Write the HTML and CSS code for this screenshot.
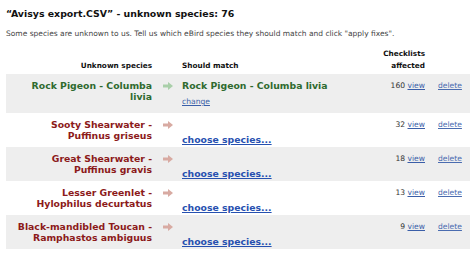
FILE: index.html
```html
<!DOCTYPE html>
<html>
<head>
<meta charset="utf-8">
<link rel="stylesheet" href="styles.css">
</head>
<body>
<h1 class="title">“Avisys export.CSV” - unknown species: 76</h1>
<p class="intro">Some species are unknown to us. Tell us which eBird species they should match and click "apply fixes".</p>
<table class="fixes">
  <thead>
    <tr>
      <th class="c-name">Unknown species</th>
      <th class="c-arrow"></th>
      <th class="c-match">Should match</th>
      <th class="c-count">Checklists<br>affected</th>
      <th class="c-del"></th>
    </tr>
  </thead>
  <tbody>
    <tr class="alt">
      <td class="c-name known">Rock Pigeon - Columba<br>livia</td>
      <td class="c-arrow"><svg class="arrow ok" width="10" height="8" viewBox="0 0 10 8"><path d="M0 2.5H5V0L10 4L5 8V5.5H0Z"/></svg></td>
      <td class="c-match"><div class="matched">Rock Pigeon - Columba livia</div><a class="change" href="#">change</a></td>
      <td class="c-count">160 <a href="#">view</a></td>
      <td class="c-del"><a class="del" href="#">delete</a></td>
    </tr>
    <tr>
      <td class="c-name">Sooty Shearwater -<br>Puffinus griseus</td>
      <td class="c-arrow"><svg class="arrow" width="10" height="8" viewBox="0 0 10 8"><path d="M0 2.5H5V0L10 4L5 8V5.5H0Z"/></svg></td>
      <td class="c-match pending"><a class="choose" href="#">choose species...</a></td>
      <td class="c-count">32 <a href="#">view</a></td>
      <td class="c-del"><a class="del" href="#">delete</a></td>
    </tr>
    <tr class="alt">
      <td class="c-name">Great Shearwater -<br>Puffinus gravis</td>
      <td class="c-arrow"><svg class="arrow" width="10" height="8" viewBox="0 0 10 8"><path d="M0 2.5H5V0L10 4L5 8V5.5H0Z"/></svg></td>
      <td class="c-match pending"><a class="choose" href="#">choose species...</a></td>
      <td class="c-count">18 <a href="#">view</a></td>
      <td class="c-del"><a class="del" href="#">delete</a></td>
    </tr>
    <tr>
      <td class="c-name">Lesser Greenlet -<br>Hylophilus decurtatus</td>
      <td class="c-arrow"><svg class="arrow" width="10" height="8" viewBox="0 0 10 8"><path d="M0 2.5H5V0L10 4L5 8V5.5H0Z"/></svg></td>
      <td class="c-match pending"><a class="choose" href="#">choose species...</a></td>
      <td class="c-count">13 <a href="#">view</a></td>
      <td class="c-del"><a class="del" href="#">delete</a></td>
    </tr>
    <tr class="alt">
      <td class="c-name">Black-mandibled Toucan -<br>Ramphastos ambiguus</td>
      <td class="c-arrow"><svg class="arrow" width="10" height="8" viewBox="0 0 10 8"><path d="M0 2.5H5V0L10 4L5 8V5.5H0Z"/></svg></td>
      <td class="c-match pending"><a class="choose" href="#">choose species...</a></td>
      <td class="c-count">9 <a href="#">view</a></td>
      <td class="c-del"><a class="del" href="#">delete</a></td>
    </tr>
  </tbody>
</table>
</body>
</html>
```
FILE: styles.css
```css
html, body {
  margin: 0;
  padding: 0;
  background: #fff;
}
body {
  padding: 7px 4px 0 6px;
  font-family: "DejaVu Sans", Verdana, sans-serif;
  color: #222;
}
.title {
  margin: 0;
  font-size: 9.4px;
  line-height: 13px;
  font-weight: bold;
  color: #111;
}
.intro {
  margin: 9px 0 0 0;
  font-size: 7.5px;
  line-height: 10px;
  color: #444;
}
.fixes {
  margin-top: 9px;
  width: 464px;
  border-collapse: collapse;
}
.fixes th {
  font-size: 7.3px;
  line-height: 12px;
  font-weight: bold;
  color: #111;
  vertical-align: bottom;
  padding: 0 0 2px 0;
}
.fixes td {
  vertical-align: top;
  padding: 6px 0;
  font-size: 7.6px;
  line-height: 11px;
}
.fixes tr.alt td {
  background: #eeeeee;
}
.c-name {
  width: 146px;
  text-align: right;
}
td.c-name {
  font-size: 9.3px !important;
  font-weight: bold;
  color: #8c1a1a;
}
td.c-name.known {
  color: #2e6a2e;
}
.c-arrow {
  width: 30px;
  text-align: center;
}
.arrow {
  display: block;
  margin: 2px 0 0 11px;
}
.arrow path { fill: #d8aaa2; }
.arrow.ok path { fill: #a9cfa9; }
.c-match {
  text-align: left;
}
.fixes td.pending {
  vertical-align: bottom;
  padding-bottom: 1px;
}
.matched {
  font-size: 9.3px;
  font-weight: bold;
  color: #2e6a2e;
}
.change {
  display: inline-block;
  margin-top: 5px;
  color: #3a5ea8;
}
.choose {
  font-size: 9.3px;
  font-weight: bold;
  color: #2650b0;
}
.c-count {
  width: 60px;
  text-align: right;
  color: #333;
}
.c-count a {
  color: #3a5ea8;
}
.c-del {
  width: 32px;
  text-align: left;
}
.fixes td.c-del {
  padding-left: 13px;
}
.del {
  color: #4a6cb0;
}
```
